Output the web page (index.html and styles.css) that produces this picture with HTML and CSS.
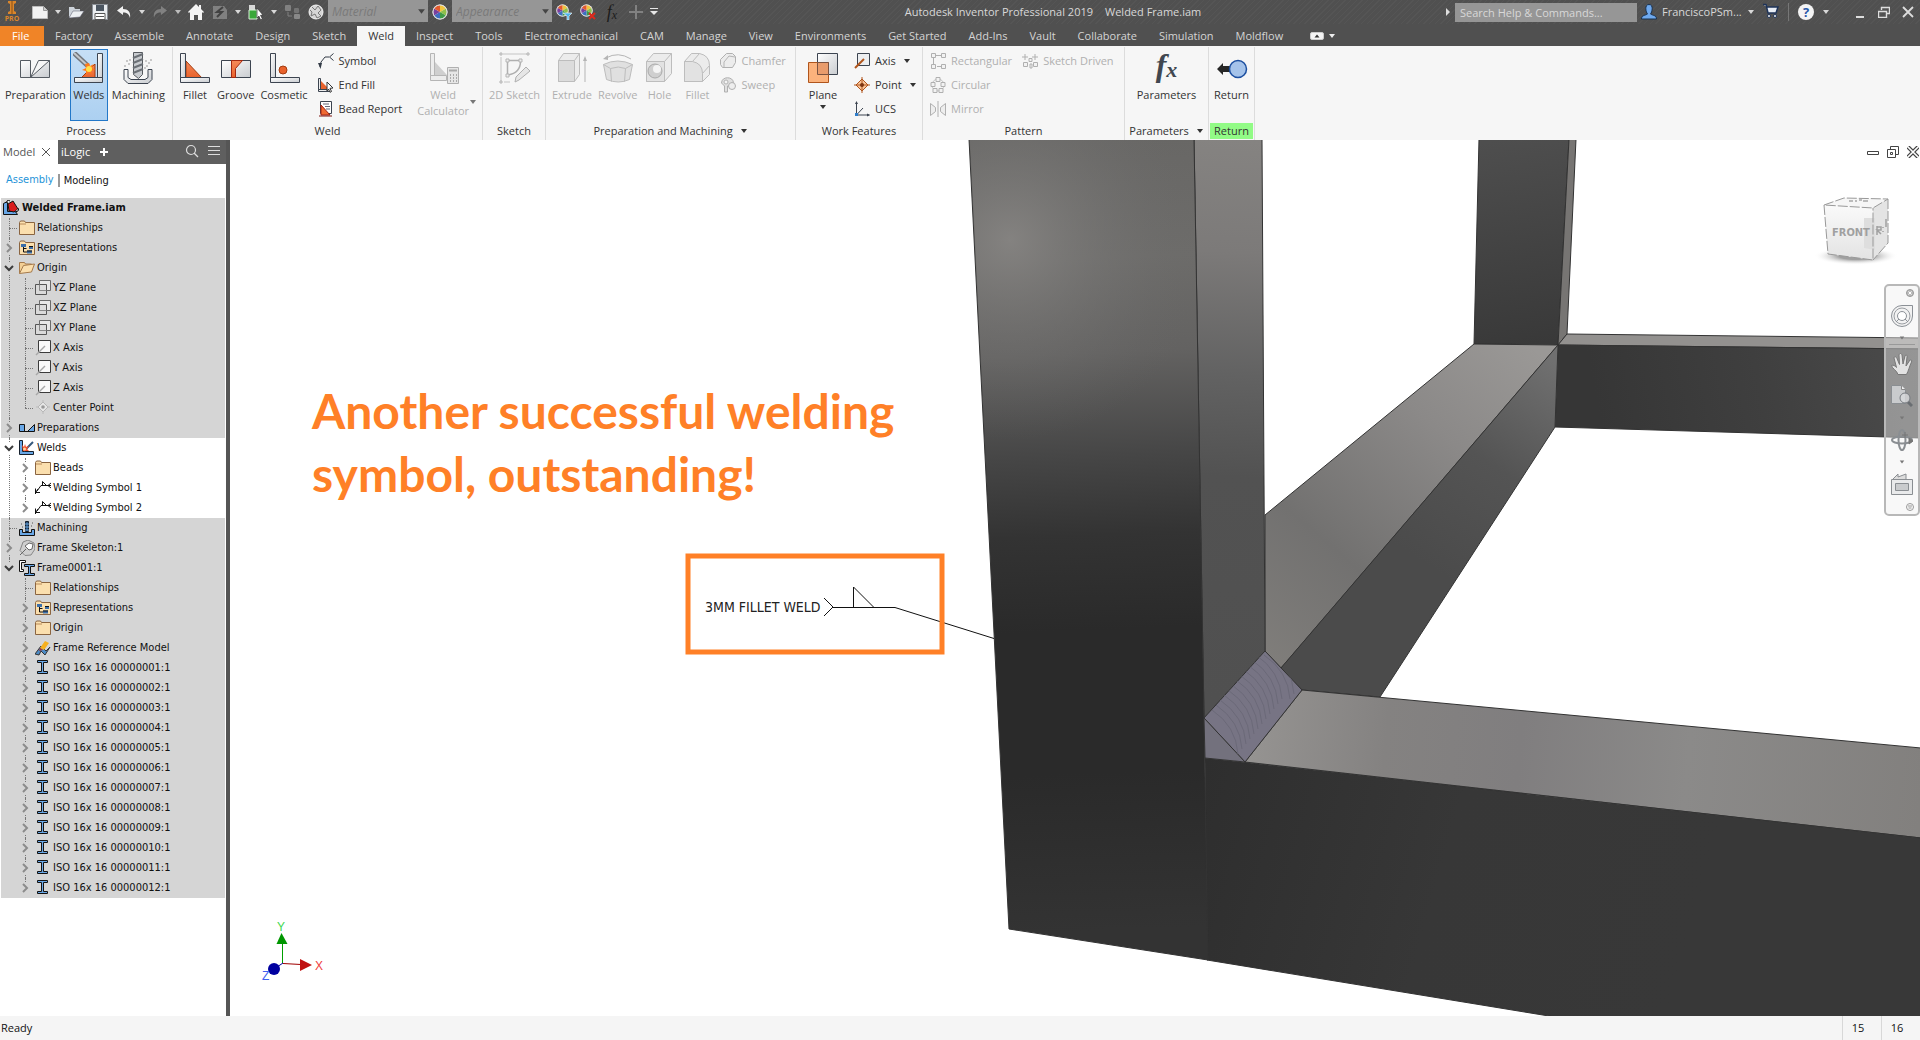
FILE: index.html
```html
<!DOCTYPE html>
<html lang="en">
<head>
    <meta charset="UTF-8">
    <meta name="viewport" content="width=device-width, initial-scale=1.0">
    <title>Autodesk Inventor Professional 2019 - Welded Frame.iam</title>
    <link rel="stylesheet" href="styles.css">
</head>
<body>
    <!-- Shared icons -->
    <svg class="defs" width="0" height="0" aria-hidden="true">
        <defs>
            <linearGradient id="metal" x1="0" y1="0" x2="1" y2="1">
                <stop offset="0" stop-color="#fff"/>
                <stop offset="1" stop-color="#c9ccd0"/>
            </linearGradient>
            <linearGradient id="hot" x1="0" y1="0" x2="0" y2="1">
                <stop offset="0" stop-color="#f58a5a"/>
                <stop offset="1" stop-color="#e8622c"/>
            </linearGradient>
        </defs>
        <symbol id="caret" viewBox="0 0 8 8"><path d="M1 2h6L4 6z" fill="currentColor"/></symbol>
        <symbol id="chev-right" viewBox="0 0 8 10"><path d="M2 1l4 4-4 4" fill="none" stroke="#8c8c8c" stroke-width="2"/></symbol>
        <symbol id="chev-down" viewBox="0 0 10 8"><path d="M1 2l4 4 4-4" fill="none" stroke="#3c3c3c" stroke-width="2"/></symbol>
        <symbol id="folder" viewBox="0 0 16 16">
            <path d="M.5 2.500l1-1.500h4l1 1.500h9v12H.5z" fill="#fbdfae" stroke="#8a6440"/>
            <path d="M1 4h6" stroke="#b98a58"/>
        </symbol>
        <symbol id="folder-open" viewBox="0 0 16 16">
            <path d="M.5 13.500V2.500h5l1 1.500h6v2" fill="#f3cf95" stroke="#a57a4c"/>
            <path d="M.5 13.500l4-8 11-1.500-3 8z" fill="#fbdfae" stroke="#a57a4c"/>
        </symbol>
        <symbol id="rep" viewBox="0 0 16 16">
            <path d="M.5 2.500l1-1.500h4l1 1.500h9v12H.5z" fill="#fbdfae" stroke="#8a6440"/>
            <path d="M4.500 6v6h4M4.500 8.500h3" fill="none" stroke="#111"/>
            <path d="M2 4h5v3H2zM10 6h4v3h-4zM8 10.500h5v3H8z" fill="#3c6ea8"/>
            <path d="M10 6.500h4M8 11h5" stroke="#111"/>
        </symbol>
        <symbol id="plane" viewBox="0 0 16 16">
            <path d="M4.500.5h11v10h-11z" fill="#e8e8e8" stroke="#6b6b6b"/>
            <path d="M.5 4.500h11v10H.5z" fill="#d9d9d9" fill-opacity=".8" stroke="#555"/>
            <path d="M4.500 4.500v6h7" fill="none" stroke="#888"/>
        </symbol>
        <symbol id="axis" viewBox="0 0 16 16">
            <path d="M3.500.5h12v12h-12z" fill="#fafafa" stroke="#3c3c3c"/>
            <path d="M1 15l9-9" stroke="#a8a8a8" stroke-width="1.500"/>
        </symbol>
        <symbol id="cpoint" viewBox="0 0 16 16">
            <path d="M8 2l5 5-5 5-5-5z" fill="#e6e6e6" stroke="#b5b5b5"/>
            <circle cx="8" cy="7" r="1.800" fill="#999"/><path d="M8 0v3M8 11v3M1 7h3M12 7h3" stroke="#bbb"/>
        </symbol>
        <symbol id="prep" viewBox="0 0 16 16">
            <path d="M.5 4.500h5v7h-5zM8.500 11.500l7-7v7z" fill="#69a7e6" stroke="#111"/><path d="M5 11.500h5" stroke="#111"/>
        </symbol>
        <symbol id="welds" viewBox="0 0 16 16">
            <path d="M.5.5h3v11h11v3H.5z" fill="#69a7e6" stroke="#16202c"/>
            <path d="M5 11l9-9" stroke="#35587c" stroke-width="2"/>
            <path d="M3 5l2 2 1-3 1 3 3-1-2 3 2 2-6 0z" fill="#f4502a"/><circle cx="5.500" cy="9" r="1.500" fill="#ffd3a0"/>
        </symbol>
        <symbol id="wsym" viewBox="0 0 16 16">
            <path d="M2 11l4-5.500h10M7.500 5.500V1.500l4 4M16 3l-3 2.500 3 2.500" fill="none" stroke="#111"/><path d="M.5 14V8.500M0 12.500h5M1 12l2-3" fill="none" stroke="#111"/>
        </symbol>
        <symbol id="mach" viewBox="0 0 16 16">
            <path d="M.5 9.500h3v3h9v-3h3v6H.5z" fill="#69a7e6" stroke="#111"/>
            <path d="M6.500 1.500h3v10h-3z" fill="#35587c" stroke="#16202c"/><path d="M6 4h4M6 7h4M6 10h4" stroke="#69a7e6"/>
            <path d="M2 4h1M13 3h1M3 7h1M12 6h1" stroke="#555"/>
        </symbol>
        <symbol id="skel" viewBox="0 0 16 16">
            <path d="M4 2l5-2 6 3 1 6-4 6-6 .5-5-5z" fill="#cfcfcf" stroke="#888"/>
            <path d="M1 15l6-6M6 6l4 4 3-1 1-5-4-1z" fill="#fff" stroke="#666"/>
        </symbol>
        <symbol id="frame" viewBox="0 0 16 16">
            <path d="M6.500.5h-6v11h4v-2h-2v-7h4z" fill="#fff" stroke="#111"/>
            <path d="M5.500 4.500h10v2h-4v7h4v2h-10v-2h4v-7h-4z" fill="#69a7e6" stroke="#111"/>
        </symbol>
        <symbol id="refm" viewBox="0 0 16 16">
            <path d="M0 14l6-8 5 5 4-4-5 8-4-4-2 4z" fill="#4c8bc6" stroke="#333"/>
            <path d="M5 8l5-7 4 2-5 7z" fill="#f6b01e"/><path d="M4 11l1-3 3 2z" fill="#a33"/>
        </symbol>
        <symbol id="beam" viewBox="0 0 16 16">
            <path d="M2.500.5h10v2h-4v9h4v2h-10v-2h4v-9h-4z" fill="#69a7e6" stroke="#111"/>
        </symbol>
        <symbol id="wheel" viewBox="0 0 16 16">
            <circle cx="8" cy="8" r="7.500" fill="#fff"/>
            <path d="M8 8V1a7 7 0 0 1 6 3.500z" fill="#f2c43c"/><path d="M8 8l6-3.500a7 7 0 0 1 0 7z" fill="#8fbf4a"/>
            <path d="M8 8l6 3.500A7 7 0 0 1 8 15z" fill="#3e9a46"/><path d="M8 8v7a7 7 0 0 1-6-3.500z" fill="#3c6ec0"/>
            <path d="M8 8l-6 3.500a7 7 0 0 1 0-7z" fill="#7a3f9c"/><path d="M8 8L2 4.500A7 7 0 0 1 8 1z" fill="#e2592c"/>
            <circle cx="8" cy="8" r="7" fill="none" stroke="#ddd"/>
        </symbol>
    </svg>

    <header class="titlebar">
        <div class="qat">
            <button class="app-logo" aria-label="Inventor menu">
                <svg width="14" height="13" viewBox="0 0 14 13"><path d="M3 0h8v2L9 3v7l2 1v2H3v-2l2-1V3L3 2z" fill="#d9862c"/><path d="M7 0v13" stroke="#8a4e12"/></svg>
                <span>PRO</span>
            </button>
            <button class="qat-btn" aria-label="New"><svg viewBox="0 0 16 16"><path d="M.5 2.500h11l4 4v8H.5z" fill="#f2f2f2" stroke="#bbb"/><path d="M11.500 2.500v4h4" fill="#ccc" stroke="#999"/></svg></button>
            <button class="qat-caret" aria-label="New options"><svg><use href="#caret"/></svg></button>
            <button class="qat-btn" aria-label="Open"><svg viewBox="0 0 16 16"><path d="M1 13V3h5l1 2h5v2" fill="#cdd3da"/><path d="M1 14l4-7h11l-4 6z" fill="#eceff2" stroke="#556" stroke-width=".5"/></svg></button>
            <button class="qat-btn" aria-label="Save"><svg viewBox="0 0 16 16"><path d="M.5.5h15v15H.5z" fill="#e9ecef" stroke="#8a8f96"/><path d="M4 1h8v6H4z" fill="#4b5560"/><path d="M3 9.500h10v6H3z" fill="#fff" stroke="#555"/><path d="M4 12.500h8" stroke="#555"/></svg></button>
            <button class="qat-btn" aria-label="Undo"><svg viewBox="0 0 16 16"><path d="M1 6.500L7 2v3c5 0 8 3 7 9-1-4-3-5.500-7-5.500V11z" fill="#f2f2f2"/></svg></button>
            <button class="qat-caret" aria-label="Undo options"><svg><use href="#caret"/></svg></button>
            <button class="qat-btn dim" aria-label="Redo"><svg viewBox="0 0 16 16"><path d="M15 6.500L9 2v3C4 5 1 8 2 14c1-4 3-5.500 7-5.500V11z" fill="#8d8d8d"/></svg></button>
            <button class="qat-caret dim" aria-label="Redo options"><svg><use href="#caret"/></svg></button>
            <button class="qat-btn" aria-label="Home"><svg viewBox="0 0 16 16"><path d="M0 8l8-8 3 3V1h2v4l3 3-1 1-1-1v8h-4v-5H6v5H2V8L1 9z" fill="#f4f4f4"/></svg></button>
            <button class="qat-btn dim" aria-label="Update"><svg viewBox="0 0 16 16"><path d="M1 2h11l3 4v9H1z" fill="#8c8c8c"/><path d="M11 3L5 8h5l-5 5" fill="none" stroke="#3f3f3f" stroke-width="2"/></svg></button>
            <button class="qat-caret" aria-label="Update options"><svg><use href="#caret"/></svg></button>
            <button class="qat-btn" aria-label="Select"><svg viewBox="0 0 16 16"><path d="M1 1h6v5H1z" fill="#d8d8d8"/><path d="M1 6h8v9H1z" fill="#3aa83a" stroke="#d8efd8"/><path d="M9 4l6 7-2.500.3 2 3.700-2 .8-1.600-3.700L9 14z" fill="#fff" stroke="#333" stroke-width=".7"/></svg></button>
            <button class="qat-caret" aria-label="Select options"><svg><use href="#caret"/></svg></button>
            <button class="qat-btn dim" aria-label="Measure"><svg viewBox="0 0 16 16"><rect x="1" y="1" width="6" height="6" rx="1" fill="#8c8c8c"/><rect x="10" y="4" width="5" height="5" rx="1" fill="#7d7d7d"/><rect x="10" y="10" width="6" height="5" rx="1" fill="#969696"/><path d="M4 8v4h4" fill="none" stroke="#8c8c8c"/></svg></button>
            <button class="qat-btn" aria-label="Material browser"><svg viewBox="0 0 16 16"><circle cx="8" cy="8" r="7" fill="#d6d6d6" stroke="#f4f4f4"/><path d="M4 3l3 3 3-4 3 4-3 3 3 3-4 2-2-4-4 2 1-4-2-2" fill="none" stroke="#777"/></svg></button>
            <label class="combo"><select aria-label="Material"><option>Material</option></select><svg><use href="#caret"/></svg></label>
            <button class="qat-btn" aria-label="Appearance browser"><svg><use href="#wheel"/></svg></button>
            <label class="combo"><select aria-label="Appearance"><option>Appearance</option></select><svg><use href="#caret"/></svg></label>
            <button class="qat-btn" aria-label="Adjust"><svg viewBox="0 0 16 16"><use href="#wheel" width="13" height="13"/><path d="M7 9h9l-3 3v4h-2v-4z" fill="#4db4ec" stroke="#fff" stroke-width=".6"/></svg></button>
            <button class="qat-btn" aria-label="Clear"><svg viewBox="0 0 16 16"><use href="#wheel" width="13" height="13"/><path d="M9 9l6 6M15 9l-6 6" stroke="#e02a1c" stroke-width="2"/></svg></button>
            <button class="qat-btn fx-small" aria-label="Parameters"><i>f</i><sub>x</sub></button>
            <button class="qat-btn dim" aria-label="Add"><svg viewBox="0 0 16 16"><path d="M8 1v14M1 8h14" stroke="#8e8e8e" stroke-width="2"/></svg></button>
            <button class="qat-caret" aria-label="Customize"><svg viewBox="0 0 8 8"><path d="M0 0h8v1H0zM0 3h8L4 7z" fill="#e6e6e6"/></svg></button>
        </div>
        <div class="app-title"><span>Autodesk Inventor Professional 2019</span><span>Welded Frame.iam</span></div>
        <div class="title-right">
            <svg class="tri" width="5" height="8" viewBox="0 0 5 8"><path d="M0 0l4 4-4 4z" fill="#ddd"/></svg>
            <input class="help-search" type="text" placeholder="Search Help &amp; Commands..." aria-label="Search Help">
            <button class="user">
                <svg width="16" height="16" viewBox="0 0 16 16"><path d="M8 .5c5 0 3 8 1.500 9.500 2 1.500 6 1 6 5H.5c0-4 4-3.500 6-5C5 8.500 3 .5 8 .5z" fill="#6fa9ee" stroke="#17304f"/></svg>
                FranciscoPSm...
                <svg width="8" height="8"><use href="#caret"/></svg>
            </button>
            <button class="cart" aria-label="App store"><svg width="18" height="16" viewBox="0 0 18 16"><path d="M1 1.500h3l2 8.500h8l2-6H5" fill="#e8edf5" stroke="#1e3358" stroke-width="1.500"/><circle cx="7" cy="13" r="1.500" fill="#fff" stroke="#1e3358"/><circle cx="13" cy="13" r="1.500" fill="#fff" stroke="#1e3358"/></svg></button>
            <button class="help" aria-label="Help"><b>?</b><svg width="8" height="8"><use href="#caret"/></svg></button>
            <div class="win-btns">
                <button aria-label="Minimize"><svg width="12" height="12" viewBox="0 0 12 12"><path d="M2 11h8" stroke="#ddd" stroke-width="2"/></svg></button>
                <button aria-label="Restore"><svg width="12" height="12" viewBox="0 0 12 12"><path d="M3.500 4V1.500h8v6H9M.5 5.500h8v6h-8z" fill="none" stroke="#ddd" stroke-width="1.400"/></svg></button>
                <button aria-label="Close"><svg width="12" height="12" viewBox="0 0 12 12"><path d="M1 1l10 10M11 1L1 11" stroke="#ddd" stroke-width="1.800"/></svg></button>
            </div>
        </div>
    </header>

    <nav class="tabs">
        <a href="#" class="file">File</a>
        <a href="#">Factory</a>
        <a href="#">Assemble</a>
        <a href="#">Annotate</a>
        <a href="#">Design</a>
        <a href="#">Sketch</a>
        <a href="#" class="active">Weld</a>
        <a href="#">Inspect</a>
        <a href="#">Tools</a>
        <a href="#">Electromechanical</a>
        <a href="#">CAM</a>
        <a href="#">Manage</a>
        <a href="#">View</a>
        <a href="#">Environments</a>
        <a href="#">Get Started</a>
        <a href="#">Add-Ins</a>
        <a href="#">Vault</a>
        <a href="#">Collaborate</a>
        <a href="#">Simulation</a>
        <a href="#">Moldflow</a>
        <button class="collapse" aria-label="Minimize ribbon">
            <svg width="14" height="8" viewBox="0 0 14 8"><rect x=".5" y=".5" width="13" height="7" rx="1.500" fill="#f4f4f4" stroke="#ccc"/><path d="M4.500 5.500L7 2.500l2.500 3z" fill="#333"/></svg>
            <svg width="8" height="8"><use href="#caret"/></svg>
        </button>
    </nav>

    <div class="ribbon">
        <section class="panel p-process">
            <div class="panel-body">
                <button class="tool">
                    <svg viewBox="0 0 32 32"><path d="M1.500 8.500h10v17h-10zM11.500 25.500l19-17v17z" fill="url(#metal)" stroke="#555b62"/><path d="M11.500 25.500l8-17h11" fill="none" stroke="#555b62"/></svg>
                    Preparation
                </button>
                <button class="tool on">
                    <svg viewBox="0 0 32 32"><path d="M22 12v14H8z" fill="url(#hot)" stroke="#a33c10"/><path d="M24.500 1.500h5v25h-5z" fill="url(#metal)" stroke="#3c4450"/><path d="M1.500 25.500h28v5h-28z" fill="url(#metal)" stroke="#3c4450"/><path d="M1 1l14 13" stroke="#70757b" stroke-width="5"/><path d="M1 1l14 13" stroke="#c3c7cb" stroke-width="2"/><path d="M16 11l1 3 4-2-2 4 3 2-4 1 1 4-3-3-3 3v-4l-4-1 4-2-1-4z" fill="#ff7a1a"/><circle cx="16" cy="17" r="3" fill="#ffe04a"/></svg>
                    Welds
                </button>
                <button class="tool">
                    <svg viewBox="0 0 32 32"><path d="M2 17.500h4v8l3 2h14l3-2v-8h4v10l-4 4H6l-4-4z" fill="url(#metal)" stroke="#3c4450"/><path d="M11.500.5h9v22l-4 4-5-4z" fill="#c8cbcf" stroke="#55595e"/><path d="M11 6l10-4M11 11l10-4M11 16l10-4M11 21l10-4" stroke="#6b7076" stroke-width="2"/><path d="M5 8v2M7 11v2M3 13v2M8 7v2M24 8v2M27 10v2M25 13v2M29 7v2M23 15v2" stroke="#999"/></svg>
                    Machining
                </button>
            </div>
            <h2>Process</h2>
        </section>

        <section class="panel p-weld">
            <div class="panel-body">
                <button class="tool">
                    <svg viewBox="0 0 32 32"><path d="M7 9l16 17H7z" fill="url(#hot)" stroke="#a33c10"/><path d="M1.500 1.500h5v25h-5z" fill="url(#metal)" stroke="#3c4450"/><path d="M1.500 25.500h29v5h-29z" fill="url(#metal)" stroke="#3c4450"/></svg>
                    Fillet
                </button>
                <button class="tool">
                    <svg viewBox="0 0 32 32"><path d="M1.500 8.500h29v17h-29z" fill="url(#metal)" stroke="#3c4450"/><path d="M11.500 8.500h11l-7 8v9h-4z" fill="url(#hot)" stroke="#a32810"/></svg>
                    Groove
                </button>
                <button class="tool">
                    <svg viewBox="0 0 32 32"><path d="M2.500 1.500h5v25h-5z" fill="url(#metal)" stroke="#3c4450"/><path d="M2.500 25.500h29v5h-29z" fill="url(#metal)" stroke="#3c4450"/><circle cx="15" cy="18" r="4" fill="#e8622c" stroke="#a33c10"/></svg>
                    Cosmetic
                </button>
                <div class="stack">
                    <button class="small"><svg viewBox="0 0 16 16"><path d="M2 14l1-5 4-5h4M15.500.5l-4 3.500 4 3.500" fill="none" stroke="#333b46"/><path d="M0 10h4l-1.500 6z" fill="#333b46"/></svg>Symbol</button>
                    <button class="small"><svg viewBox="0 0 16 16"><path d="M3 4l8 8H3z" fill="#e8622c"/><path d="M.5 1.500h2v11h-2zM.5 12.500h12v2H.5z" fill="#eee" stroke="#3c4450"/><path d="M9 5l6 6-3 .3 1.500 3.200-1.500.8-1.500-3.300L9 14z" fill="#fff" stroke="#333"/></svg>End Fill</button>
                    <button class="small"><svg viewBox="0 0 16 16"><path d="M2.500.5h11v12h-11z" fill="#fff" stroke="#3c4450"/><path d="M5 3h6M7 5.500h5M8 8h4" stroke="#667"/><path d="M3 4l9 10H3z" fill="#ef6a32" stroke="#a31f10"/><path d="M1 15h13" stroke="#7c1410"/></svg>Bead Report</button>
                </div>
                <button class="tool off with-caret">
                    <svg viewBox="0 0 32 32"><path d="M8 10l12 13H8z" fill="#cfcfcf"/><path d="M3.500 1.500h4v22h-4zM3.500 23.500h16v5h-16z" fill="#ececec" stroke="#b5b5b5"/><path d="M20.500 15.500h11v16h-11z" fill="#e6e6e6" stroke="#b0b0b0"/><path d="M22 18.500h8M23 23h1M26 23h1M29 23h1M23 26h1M26 26h1M29 26h1M23 29h1M26 29h1M29 29h1" stroke="#aaa" stroke-width="2"/></svg>
                    Weld<br>Calculator
                    <svg class="corner-caret"><use href="#caret"/></svg>
                </button>
            </div>
            <h2>Weld</h2>
        </section>

        <section class="panel p-sketch">
            <div class="panel-body">
                <button class="tool off">
                    <svg viewBox="0 0 32 32"><path d="M4 2h24M2 5v24M5 30h6" stroke="#c4c4c4"/><path d="M8.500 8.500h13M8.500 8.500v15M21.500 9c0 9-5 13-13 14" fill="none" stroke="#b0b0b0" stroke-width="1.500"/><path d="M1 1h2v2H1zM28 1h2v2h-2zM1 29h2v2H1zM7 7h3v3H7zM20 7h3v3h-3zM7 22h3v3H7z" fill="#eee" stroke="#b5b5b5"/><path d="M16 30l1-5 10-10 4 4-11 9z" fill="#e6e6e6" stroke="#b0b0b0"/></svg>
                    2D Sketch
                </button>
            </div>
            <h2>Sketch</h2>
        </section>

        <section class="panel p-prep">
            <div class="panel-body">
                <button class="tool off">
                    <svg viewBox="0 0 32 32"><path d="M2.500 8.500l5-7h16v21l-5 7h-16z" fill="#ececec" stroke="#bdbdbd"/><path d="M2.500 8.500h16v21h-16zM18.500 8.500l5-7" fill="#dcdcdc" stroke="#bdbdbd"/><path d="M29 6v24" stroke="#b5b5b5"/><path d="M27 9l2-5 2 5z" fill="#b5b5b5"/></svg>
                    Extrude
                </button>
                <button class="tool off">
                    <svg viewBox="0 0 32 32"><path d="M1.500 12.500q14-7 29 0l-3 15q-11 5-23 0z" fill="#e0e0e0" stroke="#bdbdbd"/><path d="M1.500 12.500l7 4q8-3 15 0l7-4M8.500 16.500l1 13M23.500 16.500l-1 13" fill="none" stroke="#bdbdbd"/><path d="M4 6q12-7 25 1" fill="none" stroke="#b5b5b5"/><path d="M1 7l5-4v5z" fill="#b5b5b5"/></svg>
                    Revolve
                </button>
                <button class="tool off">
                    <svg viewBox="0 0 32 32"><path d="M3.500 9.500l7-8h18v20l-7 8h-18z" fill="#ececec" stroke="#bdbdbd"/><path d="M3.500 9.500h18v20h-18zM21.500 9.500l7-8" fill="#e2e2e2" stroke="#bdbdbd"/><circle cx="12" cy="19" r="7" fill="#cfcfcf" stroke="#aaa"/><circle cx="14" cy="17" r="4" fill="#f4f4f4"/></svg>
                    Hole
                </button>
                <button class="tool off">
                    <svg viewBox="0 0 32 32"><path d="M3.500 9.500l7-8h8q10 2 10 12v9l-7 7h-18z" fill="#ececec" stroke="#bdbdbd"/><path d="M3.500 9.500h8q10 2 10 12v8h-18zM11.500 9.500l7-8M21.500 21.500l7-8" fill="#e2e2e2" stroke="#bdbdbd"/></svg>
                    Fillet
                </button>
                <div class="stack">
                    <button class="small off"><svg viewBox="0 0 16 16"><path d="M.5 6.500l6-6h6l3 3v6l-3 5h-10l-2-3z" fill="#ececec" stroke="#b0b0b0"/><path d="M4 9l5-6M4 9v5M9 3l6 1" stroke="#b5b5b5"/></svg>Chamfer</button>
                    <button class="small off"><svg viewBox="0 0 16 16"><path d="M1.500 6c0-7 12-7 12 0v3h-6v6h-3v-6z" fill="#e0e0e0" stroke="#b0b0b0"/><circle cx="12" cy="9" r="3.500" fill="#eee" stroke="#b0b0b0"/><circle cx="6" cy="5" r="2" fill="#f4f4f4" stroke="#b5b5b5"/></svg>Sweep</button>
                </div>
            </div>
            <h2>Preparation and Machining <svg><use href="#caret"/></svg></h2>
        </section>

        <section class="panel p-work">
            <div class="panel-body">
                <button class="tool">
                    <svg viewBox="0 0 32 32"><path d="M10.500 1.500h20v21h-20z" fill="url(#metal)" stroke="#3c4450"/><path d="M1.500 10.500h20v20h-20z" fill="#fbb27c" stroke="#b0551c"/><path d="M10.500 10.500h11v12h-11z" fill="#e99c6c" stroke="#7a5240"/></svg>
                    Plane
                    <svg class="below-caret"><use href="#caret"/></svg>
                </button>
                <div class="stack">
                    <button class="small"><svg viewBox="0 0 16 16"><path d="M3.500.5h12v12h-12z" fill="#eceef0" stroke="#3c4450"/><path d="M1 15l9-9" stroke="#b0551c" stroke-width="2"/></svg>Axis<svg class="c"><use href="#caret"/></svg></button>
                    <button class="small"><svg viewBox="0 0 16 16"><path d="M8 2l6 6-6 6-6-6z" fill="#fbc79c" stroke="#b0551c"/><path d="M8 0v16M0 8h16" stroke="#b0551c"/><circle cx="8" cy="8" r="2" fill="#7c3410"/></svg>Point<svg class="c"><use href="#caret"/></svg></button>
                    <button class="small"><svg viewBox="0 0 16 16"><path d="M2.500 1v13h13M2.500 14L9 7" fill="none" stroke="#3c4450"/><path d="M1 3h3L2.500 0zM13 12.500v3l3-1.500z" fill="#3c4450"/><path d="M1 12h3v3H1z" fill="#2f7ecb"/></svg>UCS</button>
                </div>
            </div>
            <h2>Work Features</h2>
        </section>

        <section class="panel p-pattern">
            <div class="panel-body">
                <div class="stack">
                    <button class="small off"><svg viewBox="0 0 16 16"><path d="M1.500.5h4v4h-4zM11.500.5h4v4h-4zM1.500 11.500h4v4h-4zM11.500 11.500h4v4h-4z" fill="#f2f2f2" stroke="#b0b0b0"/><path d="M6 2.500h5M3.500 5v6M7 13.500h4" stroke="#b0b0b0"/></svg>Rectangular</button>
                    <button class="small off"><svg viewBox="0 0 16 16"><circle cx="8" cy="8" r="6" fill="none" stroke="#c4c4c4"/><path d="M6 .5h4v4H6zM1 5.500h4v4H1zM11 5.500h4v4h-4zM3 11.500h4v4H3zM9 11.500h4v4H9z" fill="#f2f2f2" stroke="#b0b0b0"/></svg>Circular</button>
                    <button class="small off"><svg viewBox="0 0 16 16"><path d="M.5 2.500l5 4v4l-5 4zM15.500 2.500l-5 4v4l5 4z" fill="#eee" stroke="#b0b0b0"/><path d="M8 0v16" stroke="#b0b0b0"/></svg>Mirror</button>
                </div>
                <div class="stack">
                    <button class="small off"><svg viewBox="0 0 16 16"><path d="M0 4h6M3 1v6M10 4h6M13 1v6" stroke="#b0b0b0"/><path d="M1.500 9.500h4v4h-4zM7 5.500h3v3H7zM11.500 9.500h4v4h-4zM8 11h2v4H8z" fill="#f2f2f2" stroke="#b0b0b0"/></svg>Sketch Driven</button>
                </div>
            </div>
            <h2>Pattern</h2>
        </section>

        <section class="panel p-params">
            <div class="panel-body">
                <button class="tool"><span class="fx"><i>f</i><sub>x</sub></span>Parameters</button>
            </div>
            <h2>Parameters <svg><use href="#caret"/></svg></h2>
        </section>

        <section class="panel p-return">
            <div class="panel-body">
                <button class="tool">
                    <svg viewBox="0 0 32 32"><path d="M1 17l6-6v3h8v6H7v3z" fill="#262626"/><circle cx="22" cy="17" r="8.500" fill="#a5c3ea" stroke="#1c4fa0" stroke-width="1.500"/></svg>
                    Return
                </button>
            </div>
            <h2 class="exit">Return</h2>
        </section>
    </div>

    <main>
        <aside class="browser">
            <div class="browser-tabs">
                <button class="btab active">Model <svg width="10" height="10" viewBox="0 0 10 10"><path d="M1 1l8 8M9 1L1 9" stroke="#555"/></svg></button>
                <button class="btab">iLogic</button>
                <button class="btab add" aria-label="Add"><svg width="8" height="8" viewBox="0 0 8 8"><path d="M4 0v8M0 4h8" stroke="#fff" stroke-width="2"/></svg></button>
                <button class="bicon" aria-label="Search"><svg width="14" height="14" viewBox="0 0 14 14"><circle cx="6" cy="6" r="4.500" fill="none" stroke="#ddd" stroke-width="1.200"/><path d="M9 9l4 4" stroke="#ddd" stroke-width="1.200"/></svg></button>
                <button class="bicon" aria-label="Menu"><svg width="14" height="14" viewBox="0 0 14 14"><path d="M1 2.500h12M1 6.500h12M1 10.500h12" stroke="#ddd"/></svg></button>
            </div>
            <div class="modes"><a href="#" class="current">Assembly</a><a href="#">Modeling</a></div>

            <div class="tree">
                <div class="row root"><svg class="ico" viewBox="0 0 16 16"><path d="M.5 3.500l4-2v10h8l2 3H.5z" fill="#69a7e6" stroke="#111"/><path d="M5 4l5-3 5 8-4 3-5-1z" fill="#d91c1c" stroke="#111"/><path d="M3 3l2-3 2 1M12 12l3-1 1-3" fill="#fff" stroke="#111"/></svg>Welded Frame.iam</div>
                <ul>
                    <li><div class="row leaf"><svg class="ico"><use href="#folder"/></svg>Relationships</div></li>
                    <li><div class="row"><button class="tog" aria-label="Expand"><svg><use href="#chev-right"/></svg></button><svg class="ico"><use href="#rep"/></svg>Representations</div></li>
                    <li>
                        <div class="row"><button class="tog" aria-label="Collapse"><svg><use href="#chev-down"/></svg></button><svg class="ico"><use href="#folder-open"/></svg>Origin</div>
                        <ul>
                            <li><div class="row leaf"><svg class="ico"><use href="#plane"/></svg>YZ Plane</div></li>
                            <li><div class="row leaf"><svg class="ico"><use href="#plane"/></svg>XZ Plane</div></li>
                            <li><div class="row leaf"><svg class="ico"><use href="#plane"/></svg>XY Plane</div></li>
                            <li><div class="row leaf"><svg class="ico"><use href="#axis"/></svg>X Axis</div></li>
                            <li><div class="row leaf"><svg class="ico"><use href="#axis"/></svg>Y Axis</div></li>
                            <li><div class="row leaf"><svg class="ico"><use href="#axis"/></svg>Z Axis</div></li>
                            <li><div class="row leaf"><svg class="ico"><use href="#cpoint"/></svg>Center Point</div></li>
                        </ul>
                    </li>
                    <li><div class="row"><button class="tog" aria-label="Expand"><svg><use href="#chev-right"/></svg></button><svg class="ico"><use href="#prep"/></svg>Preparations</div></li>
                    <li class="active">
                        <div class="row"><button class="tog" aria-label="Collapse"><svg><use href="#chev-down"/></svg></button><svg class="ico"><use href="#welds"/></svg>Welds</div>
                        <ul>
                            <li><div class="row"><button class="tog" aria-label="Expand"><svg><use href="#chev-right"/></svg></button><svg class="ico"><use href="#folder"/></svg>Beads</div></li>
                            <li><div class="row"><button class="tog" aria-label="Expand"><svg><use href="#chev-right"/></svg></button><svg class="ico"><use href="#wsym"/></svg>Welding Symbol 1</div></li>
                            <li><div class="row"><button class="tog" aria-label="Expand"><svg><use href="#chev-right"/></svg></button><svg class="ico"><use href="#wsym"/></svg>Welding Symbol 2</div></li>
                        </ul>
                    </li>
                    <li><div class="row leaf"><svg class="ico"><use href="#mach"/></svg>Machining</div></li>
                    <li><div class="row"><button class="tog" aria-label="Expand"><svg><use href="#chev-right"/></svg></button><svg class="ico"><use href="#skel"/></svg>Frame Skeleton:1</div></li>
                    <li>
                        <div class="row"><button class="tog" aria-label="Collapse"><svg><use href="#chev-down"/></svg></button><svg class="ico"><use href="#frame"/></svg>Frame0001:1</div>
                        <ul id="members">
                            <li><div class="row leaf"><svg class="ico"><use href="#folder"/></svg>Relationships</div></li>
                            <li><div class="row"><button class="tog" aria-label="Expand"><svg><use href="#chev-right"/></svg></button><svg class="ico"><use href="#rep"/></svg>Representations</div></li>
                            <li><div class="row"><button class="tog" aria-label="Expand"><svg><use href="#chev-right"/></svg></button><svg class="ico"><use href="#folder"/></svg>Origin</div></li>
                            <li><div class="row"><button class="tog" aria-label="Expand"><svg><use href="#chev-right"/></svg></button><svg class="ico"><use href="#refm"/></svg>Frame Reference Model</div></li>
                        </ul>
                    </li>
                </ul>
            </div>
        </aside>

        <div class="viewport">
            <svg class="scene" viewBox="230 140 1690 876" preserveAspectRatio="xMinYMin slice">
                <defs>
                    <linearGradient id="gPost" gradientUnits="userSpaceOnUse" x1="1080" y1="140" x2="1110" y2="930">
                        <stop offset="0" stop-color="#686765"/><stop offset=".15" stop-color="#6d6c6a"/><stop offset=".27" stop-color="#636261"/>
                        <stop offset=".4" stop-color="#464646"/><stop offset=".5" stop-color="#333"/><stop offset=".62" stop-color="#2a2a2a"/>
                        <stop offset=".8" stop-color="#2a2a2a"/><stop offset="1" stop-color="#333"/>
                    </linearGradient>
                    <radialGradient id="gGlow" gradientUnits="userSpaceOnUse" cx="1010" cy="240" r="200">
                        <stop offset="0" stop-color="#8a8886" stop-opacity=".8"/><stop offset="1" stop-color="#666" stop-opacity="0"/>
                    </radialGradient>
                    <linearGradient id="gSide" gradientUnits="userSpaceOnUse" x1="1240" y1="140" x2="1210" y2="700">
                        <stop offset="0" stop-color="#858381"/><stop offset=".2" stop-color="#7c7a79"/><stop offset=".42" stop-color="#626262"/>
                        <stop offset=".6" stop-color="#525252"/><stop offset="1" stop-color="#505050"/>
                    </linearGradient>
                    <linearGradient id="gDiag" gradientUnits="userSpaceOnUse" x1="1530" y1="345" x2="1260" y2="660">
                        <stop offset="0" stop-color="#9a9896"/><stop offset=".3" stop-color="#8b8988"/><stop offset=".68" stop-color="#727170"/><stop offset="1" stop-color="#807e7b"/>
                    </linearGradient>
                    <linearGradient id="gDiagSide" gradientUnits="userSpaceOnUse" x1="1550" y1="360" x2="1420" y2="560">
                        <stop offset="0" stop-color="#707070"/><stop offset=".5" stop-color="#545454"/><stop offset="1" stop-color="#4b4b4b"/>
                    </linearGradient>
                    <linearGradient id="gBack" gradientUnits="userSpaceOnUse" x1="1500" y1="140" x2="1530" y2="345">
                        <stop offset="0" stop-color="#4e4e4e"/><stop offset="1" stop-color="#393939"/>
                    </linearGradient>
                    <linearGradient id="gRight" gradientUnits="userSpaceOnUse" x1="1600" y1="420" x2="1920" y2="360">
                        <stop offset="0" stop-color="#363636"/><stop offset=".5" stop-color="#3f3f3f"/><stop offset="1" stop-color="#4b4b4b"/>
                    </linearGradient>
                    <linearGradient id="gFrontTop" gradientUnits="userSpaceOnUse" x1="1250" y1="750" x2="1920" y2="810">
                        <stop offset="0" stop-color="#959391"/><stop offset=".2" stop-color="#848281"/><stop offset=".4" stop-color="#807e7f"/>
                        <stop offset=".65" stop-color="#8b8a89"/><stop offset="1" stop-color="#82807e"/>
                    </linearGradient>
                    <linearGradient id="gFront" gradientUnits="userSpaceOnUse" x1="1205" y1="760" x2="1700" y2="900">
                        <stop offset="0" stop-color="#2e2e2e"/><stop offset=".5" stop-color="#373737"/><stop offset="1" stop-color="#383838"/>
                    </linearGradient>
                    <linearGradient id="gCube" x1="0" y1="0" x2="0" y2="1">
                        <stop offset="0" stop-color="#fafafa"/><stop offset="1" stop-color="#e3e3e3"/>
                    </linearGradient>
                    <radialGradient id="gShadow"><stop offset=".4" stop-color="#888" stop-opacity=".8"/><stop offset="1" stop-color="#fff" stop-opacity="0"/></radialGradient>
                    <clipPath id="beadClip"><path d="M1265 651l37 39-57 72-41-44z"/></clipPath>
                </defs>

                <!-- frame members, back to front -->
                <g class="edges">
                    <path d="M1479 139h90l-11 206-84-1z" fill="url(#gBack)"/>
                    <path d="M1569 139h7l-9 195-9 11z" fill="#777573"/>
                    <path d="M1567 334l354 4v11l-363-4z" fill="#93918f"/>
                    <path d="M1558 345l363 4v89l-366-11z" fill="url(#gRight)"/>
                    <path d="M1265 515l209-171 84 1-277 323-16-17z" fill="url(#gDiag)"/>
                    <path d="M1558 345l-3 82-175 270-78-7-21-22z" fill="url(#gDiagSide)"/>
                    <path d="M1302 690l619 58v90l-676-76z" fill="url(#gFrontTop)"/>
                    <path d="M1205 758l716 80v179h-366l-348-57z" fill="url(#gFront)"/>
                    <path d="M1194 139h68l3 512-61 67z" fill="url(#gSide)"/>
                    <path d="M969 139h225l10 579 4 242-199-31z" fill="url(#gPost)"/>
                    <path d="M1265 651l37 39-57 72-41-44z" fill="#777484"/>
                    <path d="M1204 718l41 44-40-4z" fill="#73717d"/>
                </g>
                <path d="M970 140h224l5 320h-213z" fill="url(#gGlow)"/>
                <g class="ripples" clip-path="url(#beadClip)">
                    <path d="M1256 655q24 16 26 44"/>
                    <path d="M1252 660q24 16 26 44"/>
                    <path d="M1248 665q24 16 26 44"/>
                    <path d="M1244 670q24 16 26 44"/>
                    <path d="M1240 675q24 16 26 44"/>
                    <path d="M1236 680q24 16 26 44"/>
                    <path d="M1232 685q24 16 26 44"/>
                    <path d="M1228 690q24 16 26 44"/>
                    <path d="M1224 695q24 16 26 44"/>
                    <path d="M1220 700q24 16 26 44"/>
                    <path d="M1216 705q24 16 26 44"/>
                    <path d="M1212 710q24 16 26 44"/>
                    <path d="M1264 655q24 16 26 44"/>
                    <path d="M1268 650q24 16 26 44"/>
                </g>

                <!-- welding symbol -->
                <path d="M824 598l9 9-9 9M833 607.500h62l99 31M853.500 608v-21l20 20" fill="none" stroke="#111"/>
                <text class="weld-note" x="705" y="612">3MM FILLET WELD</text>
                <rect x="688" y="556" width="254" height="96" fill="none" stroke="#ff8027" stroke-width="5"/>

                <!-- axis triad -->
                <path d="M282.500 963v-20" stroke="#00a000"/><path d="M281.500 933l6 11h-11z" fill="#009600"/>
                <path d="M283 963.500l18 1" stroke="#a00000"/><path d="M300 959l12 6-12 6z" fill="#c01010"/>
                <path d="M283 963l-9 6" stroke="#0000a0"/><circle cx="274" cy="969" r="6" fill="#0000a0"/>
                <text class="axis-y" x="277" y="931">Y</text>
                <text class="axis-x" x="315" y="970">X</text>
                <text class="axis-z" x="262" y="980">Z</text>
            </svg>

            <p class="callout">Another successful welding<br>symbol, outstanding!</p>

            <div class="doc-btns">
                <button aria-label="Minimize document"><svg width="12" height="12" viewBox="0 0 12 12"><path d="M.5 5.500h11v3H.5z" fill="#fff" stroke="#444"/></svg></button>
                <button aria-label="Restore document"><svg width="12" height="12" viewBox="0 0 12 12"><path d="M3.500 3V.5h8v8H9M.5 3.500h8v8h-8z" fill="#fff" stroke="#444"/><path d="M3.500 6.500h2v2h-2z" fill="none" stroke="#444"/></svg></button>
                <button aria-label="Close document"><svg width="12" height="12" viewBox="0 0 12 12"><path d="M1 1l10 10M11 1L1 11" stroke="#444" stroke-width="4"/><path d="M1 1l10 10M11 1L1 11" stroke="#fff" stroke-width="1.600"/></svg></button>
            </div>

            <svg class="cube" width="90" height="80" viewBox="0 0 90 80">
                <ellipse cx="43" cy="64" rx="42" ry="9" fill="url(#gShadow)"/>
                <path d="M11 13l20-7 44 1-15 9z" fill="#f6f6f6"/>
                <path d="M11 13l49 3v52l-45-6z" fill="url(#gCube)"/>
                <path d="M60 16l15-9v44L60 68z" fill="#e4e4e4"/>
                <path d="M51 26h11v32l-11-2z" fill="#dedede"/>
                <path d="M11 13l20-7 44 1-15 9zM11 13l4 49 45 6V16M75 7v44L60 68" fill="none" stroke="#999" stroke-dasharray="10 2"/>
                <path d="M36 9h4M42 9h2M46 8h3M50 9h5" stroke="#bbb" stroke-width="2"/>
                <path d="M64 34v9M64 35h4v3h-4l4 4M70 35v1M70 39v1M73 27v8" fill="none" stroke="#a0a0a0" stroke-width="1.500"/>
                <text class="cube-text" x="19" y="44">FRONT</text>
            </svg>

            <div class="navbar">
                <svg class="edge" viewBox="0 0 8 8"><circle cx="4" cy="4" r="3.500" fill="#bbb" stroke="#999"/><path d="M2.500 2.500l3 3M5.500 2.500l-3 3" stroke="#fff"/></svg>
                <button aria-label="Steering wheel"><svg viewBox="0 0 22 22"><path d="M11 .5h10.500V11A10.500 10.500 0 1 1 11 .5z" fill="#f2f2f2" stroke="#8b9096"/><circle cx="11" cy="11" r="8" fill="none" stroke="#9a9ea3"/><circle cx="11" cy="11" r="4.500" fill="#fff" stroke="#8b9096"/><path d="M5 17l3-3M14 14l3 3" stroke="#8b9096"/></svg></button>
                <svg class="nc"><use href="#caret"/></svg>
                <hr>
                <button aria-label="Pan"><svg viewBox="0 0 22 22"><path d="M7 21.500c-1-4-6-6-6.500-9 2-1 3.500.5 5 2L3 5c.5-2 2-1.500 3 .5l2.500 6L8 2c.5-2 2.500-2 3 0l1 9 2-8c.5-1.500 2.500-1 2 1l-1 9 4-6c1.500-.5 2 .5 1.500 2-2 4-3 9-5 12.500z" fill="#e2e2e2" stroke="#777"/></svg></button>
                <button aria-label="Zoom"><svg viewBox="0 0 22 22"><path d="M.5.5h10l4 4v14H.5z" fill="#c9cbcd" stroke="#8a8e92"/><path d="M10.500.5v4h4" fill="#eee" stroke="#888"/><path d="M17 17l4 4" stroke="#6a6e72" stroke-width="3"/><circle cx="14" cy="13" r="5" fill="#d8dadc" fill-opacity=".8" stroke="#777b80"/></svg></button>
                <svg class="nc"><use href="#caret"/></svg>
                <button aria-label="Orbit"><svg viewBox="0 0 22 22"><ellipse cx="11" cy="11" rx="3.500" ry="10" fill="none" stroke="#8a8e92" stroke-width="2"/><ellipse cx="11" cy="11" rx="10" ry="3.500" fill="none" stroke="#8a8e92" stroke-width="2"/><path d="M14 3v6M11 6h6M18 9l4 3-4 3z" fill="#777" stroke="#777"/></svg></button>
                <svg class="nc"><use href="#caret"/></svg>
                <button aria-label="Look at"><svg viewBox="0 0 22 22"><path d="M.5 6.500h21v15H.5z" fill="#e9eaeb" stroke="#8a8e92"/><path d="M4.500 10.500h13v7h-13z" fill="#c9cbcd" stroke="#8a8e92"/><path d="M2 6l5-5v3l8-3v5" fill="#ddd" stroke="#8a8e92"/></svg></button>
                <svg class="edge" viewBox="0 0 8 8"><circle cx="4" cy="4" r="3.500" fill="none" stroke="#999"/><path d="M2 3h4M2.500 5h3" stroke="#999"/></svg>
            </div>
        </div>
    </main>

    <footer class="status">
        <span class="msg">Ready</span>
        <span class="count">15</span>
        <span class="count">16</span>
    </footer>

    <script>
        // Add the ISO members under Frame0001:1
        const members = document.getElementById('members');
        for (let i = 1; i <= 12; i++) {
            const number = String(i).padStart(8, '0');
            members.insertAdjacentHTML('beforeend', `
                <li><div class="row"><button class="tog" aria-label="Expand"><svg><use href="#chev-right"/></svg></button><svg class="ico"><use href="#beam"/></svg>ISO 16x 16 ${number}:1</div></li>
            `);
        }
    </script>
</body>
</html>
```

FILE: styles.css
```css
* {
    box-sizing: border-box;
}

body {
    margin: 0;
    height: 100vh;
    display: flex;
    flex-direction: column;
    overflow: hidden;
    font-family: "Open Sans", "Noto Sans", sans-serif;
    font-size: 11px;
    line-height: 16px;
    color: #333;
    background: #fff;
}

button {
    font: inherit;
    color: inherit;
    background: none;
    border: 0;
    padding: 0;
    cursor: pointer;
}

a {
    color: inherit;
    text-decoration: none;
}

svg {
    flex: none;
}

.defs {
    position: absolute;
}

/* Title bar */
.titlebar {
    display: flex;
    align-items: center;
    height: 24px;
    flex: none;
    color: #d8d8d8;
    background: repeating-linear-gradient(135deg, #505050 0 3px, #555 3px 4px);
}

.qat {
    display: flex;
    align-items: center;
    height: 24px;
}

.app-logo {
    width: 28px;
    padding-right: 4px;
    line-height: 8px;
    font-size: 7px;
    font-weight: bold;
    color: #d9862c;
    display: flex;
    flex-direction: column;
    align-items: center;
    gap: 1px;
}

.qat-btn {
    width: 24px;
    height: 22px;
    display: flex;
    align-items: center;
    justify-content: center;
}

.qat-btn svg {
    width: 16px;
    height: 16px;
}

.qat-caret {
    width: 12px;
    height: 22px;
    display: flex;
    align-items: center;
    justify-content: center;
}

.qat-caret svg {
    width: 8px;
    height: 8px;
}

.dim {
    opacity: 0.8;
}

.fx-small {
    font-family: "Liberation Serif", serif;
    font-size: 18px;
    font-style: italic;
    color: #1c1c1c;
}

.fx-small sub {
    font-size: 12px;
    line-height: 8px;
    margin-top: 6px;
}

.combo {
    position: relative;
    width: 100px;
    height: 22px;
    margin-bottom: 2px;
}

.combo select {
    appearance: none;
    width: 100%;
    height: 22px;
    padding: 0 4px;
    border: 0;
    font: italic 12px "Open Sans", sans-serif;
    color: #7a7a7a;
    background: #969696;
}

.combo svg {
    position: absolute;
    right: 2px;
    top: 7px;
    width: 9px;
    height: 9px;
    color: #444;
}

.app-title {
    flex: 1;
    display: flex;
    justify-content: center;
    gap: 12px;
    white-space: nowrap;
}

.title-right {
    display: flex;
    align-items: center;
}

.help-search {
    width: 182px;
    height: 19px;
    margin: 0 4px;
    padding: 0 5px;
    border: 0;
    font: inherit;
    color: #eee;
    background: #969696;
}

.help-search::placeholder {
    color: #d8d8d8;
}

.user {
    display: flex;
    align-items: center;
    gap: 5px;
    width: 114px;
    white-space: nowrap;
}

.cart {
    display: flex;
    width: 34px;
    height: 18px;
    padding-left: 7px;
    border-right: 1px solid #777;
}

.help {
    display: flex;
    align-items: center;
    gap: 8px;
    margin-left: 9px;
}

.help b {
    width: 16px;
    height: 16px;
    border-radius: 8px;
    background: #f4f4f4;
    color: #2857a8;
    font-size: 13px;
}

.win-btns {
    display: flex;
    gap: 12px;
    margin: 0 6px 0 24px;
}

.win-btns svg,
.doc-btns svg {
    display: block;
}

/* Ribbon tabs */
.tabs {
    display: flex;
    height: 22px;
    flex: none;
    padding-top: 2px;
    color: #d4d4d4;
    background: #505050;
    line-height: 20px;
    white-space: nowrap;
}

.tabs a {
    padding: 0 11px;
}

.tabs .file {
    width: 44px;
    padding: 0 12px;
    color: #fff;
    background: #f08427;
}

.tabs .active {
    color: #333;
    background: #f6f6f6;
}

.collapse {
    display: flex;
    align-items: center;
    gap: 4px;
    margin-left: 16px;
    color: #eee;
}

/* Ribbon */
.ribbon {
    display: flex;
    height: 94px;
    flex: none;
    padding-top: 1px;
    background: #f6f6f6;
}

.panel {
    flex: none;
    padding-top: 2px;
    border-right: 1px solid #dcdcdc;
}

.panel-body {
    display: flex;
    height: 72px;
    padding-left: 3px;
}

.panel h2 {
    margin: 2px 0 0;
    font-size: 11px;
    font-weight: normal;
    line-height: 16px;
    text-align: center;
    white-space: nowrap;
}

.panel h2 svg {
    width: 8px;
    height: 8px;
    margin-left: 4px;
}

.panel .exit {
    margin: 2px 1px 0;
    background: #92fb86;
}

.p-process { width: 173px; }
.p-weld { width: 310px; }
.p-sketch { width: 63px; }
.p-prep { width: 250px; }
.p-work { width: 127px; }
.p-pattern { width: 202px; }
.p-params { width: 84px; }
.p-return { width: 46px; }

.p-process .panel-body { gap: 1px; padding-left: 2px; }
.p-work .panel-body { padding-left: 8px; }
.p-pattern .panel-body { gap: 6px; }

.p-params .panel-body,
.p-return .panel-body {
    padding: 0;
}

.tool {
    display: flex;
    flex-direction: column;
    align-items: center;
    height: 72px;
    padding: 2px 2px 0;
    border: 1px solid transparent;
    white-space: nowrap;
    position: relative;
}

.tool svg,
.fx {
    width: 32px;
    height: 32px;
    margin-bottom: 3px;
}

.tool.on {
    border-color: #2277c8;
    background: linear-gradient(#c6dff6, #acd0f1);
}

.tool .corner-caret,
.tool .below-caret {
    width: 8px;
    height: 8px;
    margin: 0;
}

.tool .corner-caret {
    position: absolute;
    right: -6px;
    bottom: 14px;
    color: #777;
}

.p-weld .stack {
    margin-left: 7px;
}

.p-weld .with-caret {
    margin-left: 12px;
}

.p-params .tool,
.p-return .tool {
    width: 100%;
}

.fx {
    display: flex;
    justify-content: center;
    font: italic bold 32px "Liberation Serif", serif;
    line-height: 26px;
    color: #404750;
}

.fx sub {
    margin-top: 8px;
    font-size: 22px;
    line-height: 20px;
}

.off {
    color: #b0b0b0;
}

.stack {
    display: flex;
    flex-direction: column;
    margin-left: 4px;
}

.p-work .stack {
    margin-left: 12px;
}

.small {
    display: flex;
    align-items: center;
    gap: 5px;
    height: 24px;
    white-space: nowrap;
}

.small svg {
    width: 16px;
    height: 16px;
}

.small .c {
    width: 8px;
    height: 8px;
    margin-left: 2px;
}

/* Workspace */
main {
    flex: 1;
    min-height: 0;
    display: flex;
}

.browser {
    width: 230px;
    flex: none;
    border-right: 4px solid #555;
    background: #fff;
    font-family: "DejaVu Sans Condensed", "DejaVu Sans", sans-serif;
    color: #111;
    overflow: hidden;
}

.browser-tabs {
    display: flex;
    height: 24px;
    background: #5f5f5f;
    font-family: "Open Sans", sans-serif;
    color: #fff;
}

.btab {
    padding: 0 3px;
    display: flex;
    align-items: center;
}

.btab.active {
    width: 58px;
    gap: 6px;
    color: #555;
    background: #fff;
}

.btab.add {
    margin: 0 auto 0 4px;
}

.bicon {
    width: 22px;
    padding-top: 2px;
}

.bicon:last-child {
    margin-right: 1px;
}

.modes {
    display: flex;
    height: 34px;
    padding: 0 0 2px 6px;
    align-items: center;
}

.modes a + a {
    margin-left: 4px;
    padding-left: 4px;
    border-left: 2px solid #999;
    line-height: 13px;
}

.modes .current {
    color: #1f94d8;
}

.tree {
    margin: 0 1px;
}

.tree ul {
    list-style: none;
    margin: 0;
    padding: 0;
}

.tree li ul {
    padding-left: 16px;
}

.tree,
.tree li {
    background: #d5d5d5;
}

.tree li {
    position: relative;
}

.tree li.active,
.tree li.active li {
    background: #fff;
}

/* dotted guide line */
.tree li::before {
    content: "";
    position: absolute;
    left: 8px;
    top: 0;
    bottom: 0;
    border-left: 1px dotted #777;
}

.tree li:last-child::before {
    bottom: auto;
    height: 10px;
}

.row {
    display: flex;
    align-items: center;
    gap: 2px;
    height: 20px;
    white-space: nowrap;
}

.row .ico {
    width: 16px;
    height: 16px;
}

.root {
    padding-left: 2px;
    gap: 3px;
    font-weight: bold;
}

.leaf::before {
    content: "";
    width: 8px;
    margin-left: 8px;
    border-top: 1px dotted #777;
}

.tog {
    position: relative;
    width: 16px;
    height: 12px;
    display: flex;
    justify-content: center;
    align-items: center;
    background: #d5d5d5;
}

.active .tog {
    background: #fff;
}

.tog svg {
    width: 10px;
    height: 10px;
}

/* Graphics window */
.viewport {
    flex: 1;
    position: relative;
    overflow: hidden;
}

.scene {
    position: absolute;
    width: 100%;
    height: 100%;
}

.edges path {
    stroke: #333;
    stroke-width: 1;
}

.ripples path {
    fill: none;
    stroke: #6b6978;
    stroke-width: 1;
}

.weld-note {
    font: 14px "DejaVu Sans Condensed", sans-serif;
    fill: #222;
}

.axis-x, .axis-y, .axis-z {
    font: 12px "Liberation Sans", sans-serif;
    fill: #f04040;
}

.axis-y { fill: #40d850; }
.axis-z { fill: #4060f0; }

.callout {
    position: absolute;
    left: 82px;
    top: 239px;
    margin: 0;
    font: bold 48px/63px Lato, "Open Sans", sans-serif;
    color: #ff8027;
    white-space: nowrap;
}

.doc-btns {
    position: absolute;
    top: 6px;
    right: 1px;
    display: flex;
    gap: 8px;
}

.cube {
    position: absolute;
    top: 52px;
    right: 17px;
}

.cube-text {
    font: bold 11px "DejaVu Sans Condensed", sans-serif;
    fill: #a0a0a0;
}

.navbar {
    position: absolute;
    top: 144px;
    right: 0;
    width: 36px;
    height: 232px;
    padding: 3px 4px;
    display: flex;
    flex-direction: column;
    align-items: center;
    border: 2px solid #b8b8b8;
    border-radius: 5px;
    background: rgba(240, 240, 240, 0.45);
    color: #777;
}

.navbar button {
    width: 22px;
    height: 24px;
    margin-top: 8px;
}

.navbar button svg {
    width: 22px;
    height: 22px;
}

.navbar .edge {
    width: 8px;
    height: 8px;
    align-self: flex-end;
}

.navbar .edge:last-child {
    margin-top: auto;
}

.navbar .nc {
    width: 6px;
    height: 6px;
    margin-top: 6px;
}

.navbar hr {
    width: 26px;
    margin: 3px 0 0;
    border: 0;
    border-top: 1px solid #999;
}

/* Status bar */
.status {
    display: flex;
    height: 24px;
    flex: none;
    line-height: 24px;
    background: #f5f5f5;
    color: #111;
}

.status .msg {
    flex: 1;
    padding-left: 1px;
}

.status .count {
    width: 39px;
    padding-right: 8px;
    text-align: center;
    border-left: 1px solid #d8d8d8;
}
```
